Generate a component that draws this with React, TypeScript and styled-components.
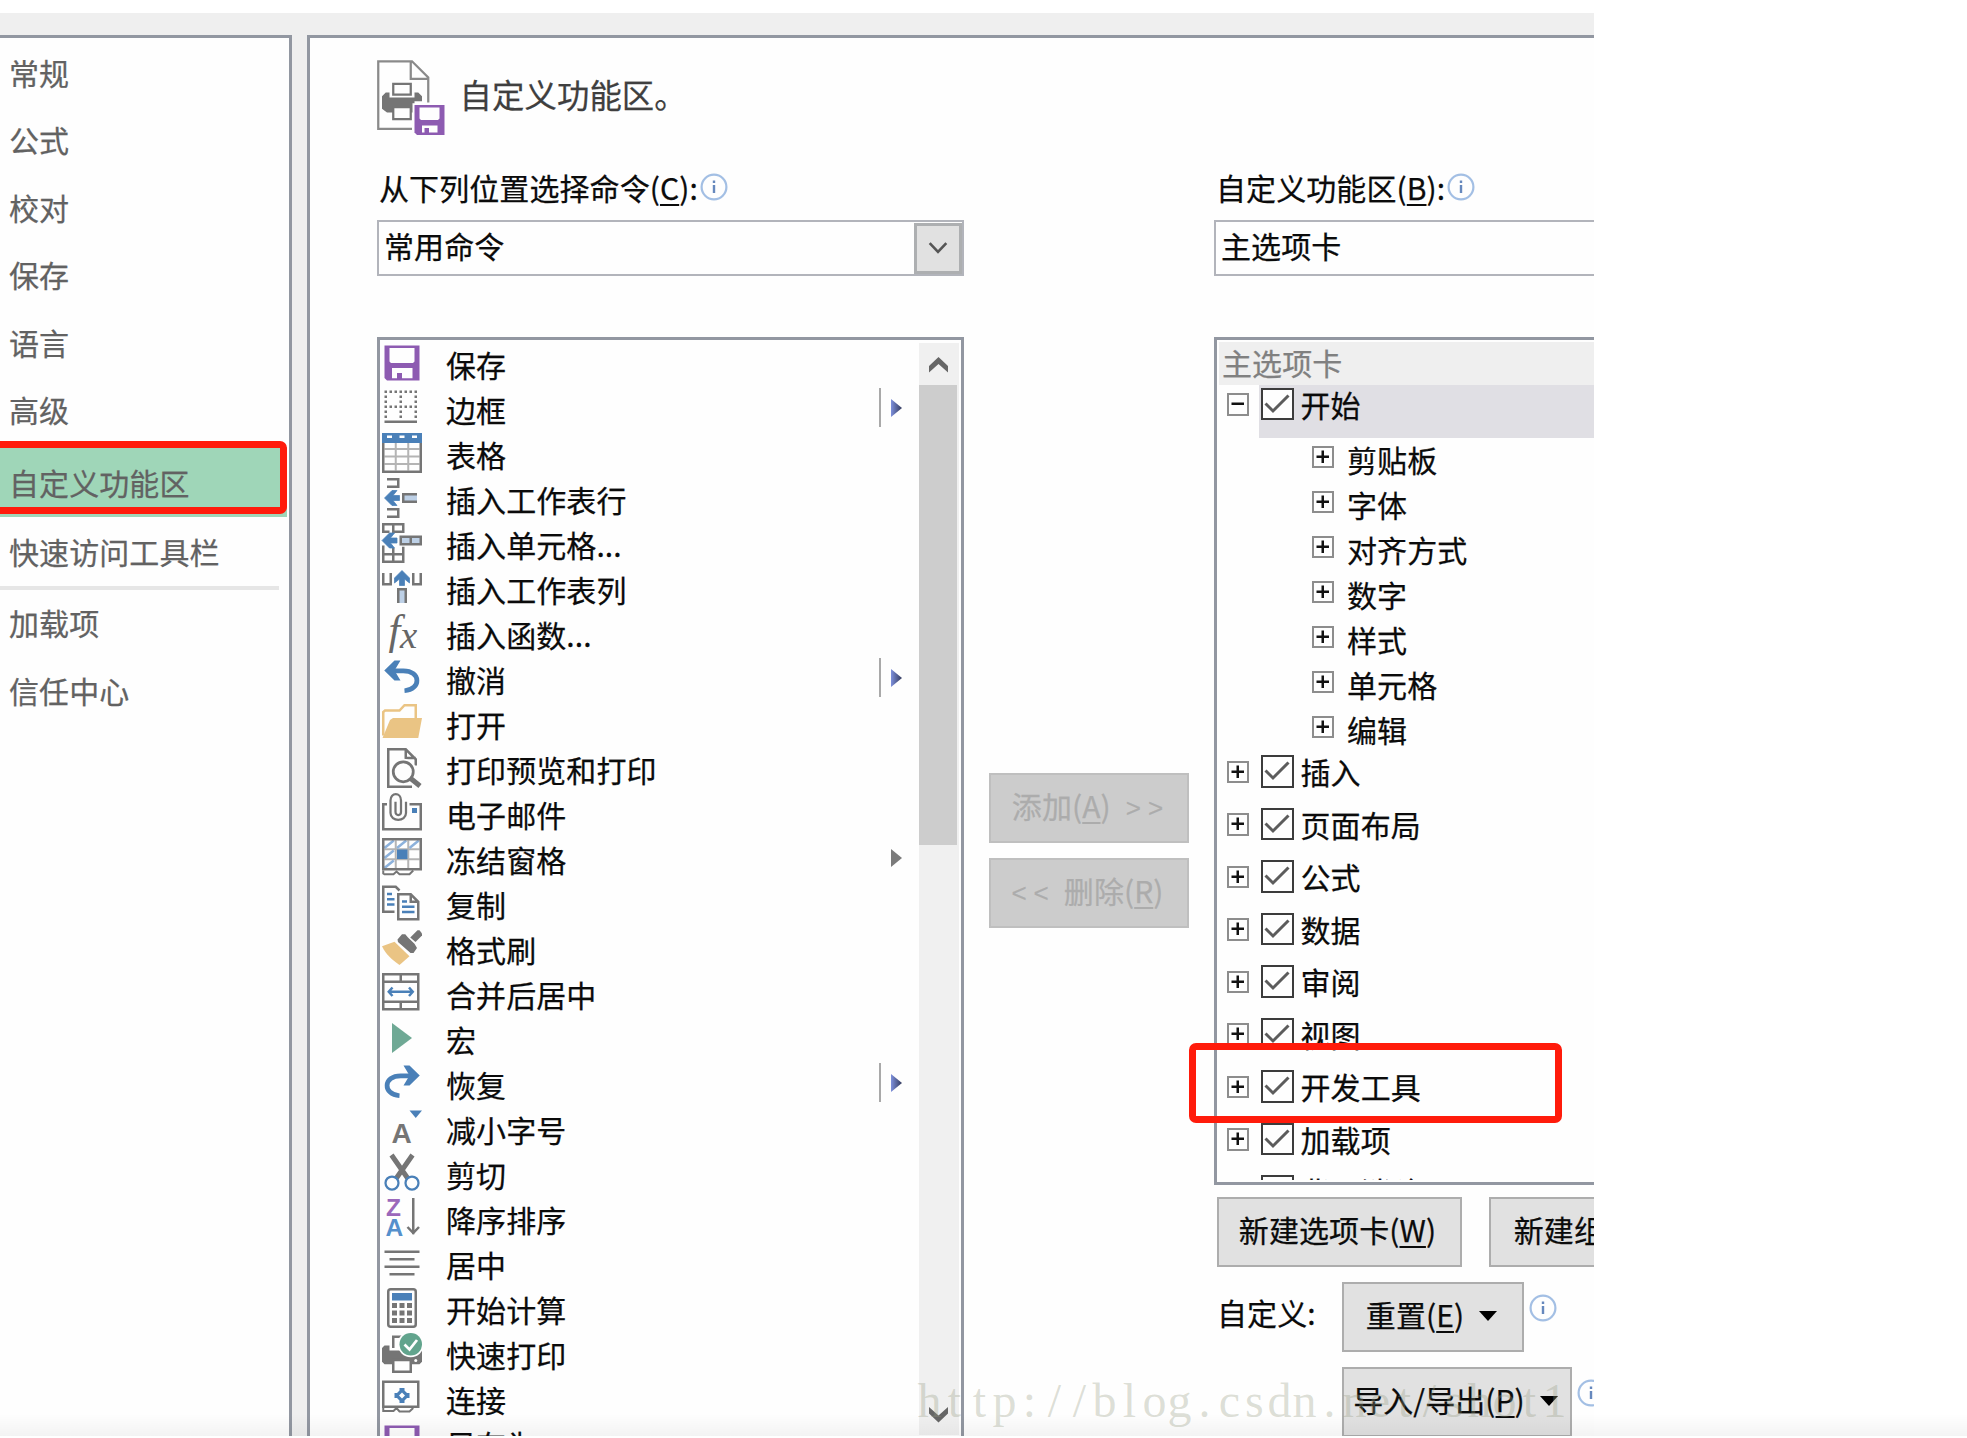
import React from "react";
import styled, { createGlobalStyle, css } from "styled-components";

const GRAY = "#757575";
const BLUE = "#4a80b8";
const PALE = "#bdd0e6";
const PURPLE = "#8d5bb1";
const GOLD = "#eac484";
const GREEN = "#6fa995";

const Global = createGlobalStyle`
  html, body { margin: 0; padding: 0; background: #fff; }
  * { box-sizing: border-box; }
  body {
    font-family: "Noto Sans CJK SC", "Liberation Sans", sans-serif;
    font-size: 30px;
    line-height: 40px;
    letter-spacing: 0.08px;
    color: #0b0b0b;
    -webkit-text-stroke-width: 0.25px;
    overflow: hidden;
  }
`;

const Screen = styled.div`
  position: relative;
  width: 1967px;
  height: 1438px;
  padding-top: 13px;
  overflow: hidden;
  background: #fff;
  white-space: nowrap;
`;

const Dialog = styled.div`
  display: flex;
  gap: 15px;
  width: 1594px;
  height: 1423px;
  padding-top: 22px;
  overflow: hidden;
  background: #efefef;
`;

const frame = css`
  border: 0 solid #9297a1;
`;

const Sidebar = styled.nav`
  ${frame}
  flex: none;
  width: 292px;
  border-top-width: 3px;
  border-right-width: 3px;
  background: #fefefe;
`;

const NavItem = styled.div<{ $active?: boolean }>`
  display: flex;
  align-items: center;
  width: 287px;
  height: ${(p) => (p.$active ? 70 : 67.5)}px;
  margin-top: ${(p) => (p.$active ? 4 : 0)}px;
  padding-left: 9px;
  color: #626262;
  background: ${(p) => (p.$active ? "#9fd6b8" : "transparent")};
`;

const NavRule = styled.div`
  width: 279px;
  height: 4px;
  margin: 1px 0 -1px;
  background: #e6e6e6;
`;

const Content = styled.main`
  ${frame}
  flex: 1;
  min-width: 0;
  padding: 22px 0 0 67px;
  border-top-width: 3px;
  border-left-width: 3px;
  background: #fefefe;
`;

const Title = styled.header`
  display: flex;
  gap: 15px;
  height: 110px;
  font-size: 32.4px;
  color: #3f3f3f;
  span { padding-top: 14px; }
`;

const Columns = styled.div`
  display: flex;
`;

const Column = styled.section<{ $width: number }>`
  flex: none;
  width: ${(p) => p.$width}px;
`;

const Label = styled.div`
  display: flex;
  align-items: flex-start;
  height: 50px;
  padding: 0 0 0 2px;
  line-height: 34px;
`;

const Key = styled.span`
  text-decoration: underline;
  text-decoration-thickness: 2px;
  text-underline-offset: 4px;
`;

const Combo = styled.div`
  display: flex;
  align-items: center;
  justify-content: space-between;
  height: 56px;
  padding-left: 5px;
  border: 2.5px solid #b2b4bb;
  line-height: 44px;
  span { padding-bottom: 6px; }
`;

const ComboButton = styled.div`
  display: flex;
  align-items: center;
  justify-content: center;
  width: 48px;
  height: 51px;
  border: 3px solid #adafb1;
  background: #e1e1e1;
`;

const ListBox = styled.div`
  ${frame}
  display: flex;
  height: 1110px;
  margin-top: 61px;
  padding-top: 3px;
  border-width: 3px;
  overflow: hidden;
`;

const Rows = styled.div`
  flex: 1;
`;

const Row = styled.div`
  display: flex;
  align-items: flex-start;
  height: 45px;
  padding-left: 2px;
  > svg { flex: none; }
`;

const RowText = styled.span`
  flex: 1;
  padding: 1px 0 0 24px;
`;

const SplitMark = styled.span<{ $line: boolean }>`
  display: flex;
  align-items: center;
  width: 40px;
  height: 39px;
  padding-left: 9.5px;
  border-left: 2.5px solid ${(p) => (p.$line ? "#a9a9a9" : "transparent")};
`;

const ScrollBar = styled.div`
  display: flex;
  flex-direction: column;
  justify-content: space-between;
  width: 40px;
  height: 1092px;
  margin-right: 2px;
  background: #f0f0f0;
`;

const ScrollCap = styled.div`
  display: flex;
  justify-content: center;
  align-items: center;
  width: 38px;
  height: 42px;
  padding-top: 2px;
`;

const Thumb = styled.div`
  width: 38px;
  height: 460px;
  margin-bottom: auto;
  background: #cdcdcd;
`;

const Transfer = styled.div`
  display: flex;
  flex: none;
  flex-direction: column;
  gap: 14.5px;
  width: 250px;
  padding: 603px 0 0 25px;
`;

const PushButton = styled.div<{ $w: number; $off?: boolean }>`
  display: flex;
  flex: none;
  align-items: center;
  justify-content: center;
  gap: 15px;
  width: ${(p) => p.$w}px;
  height: 70px;
  padding: 0 3px 6px 0;
  border: 2.5px solid ${(p) => (p.$off ? "#bfbfbf" : "#adadad")};
  background: ${(p) => (p.$off ? "#cccccc" : "#e1e1e1")};
  color: ${(p) => (p.$off ? "#acacac" : "#0b0b0b")};
  > svg { margin-top: 3px; }
`;

const Chevrons = styled.span`
  font-family: "Liberation Sans", sans-serif;
  font-size: 26px;
  letter-spacing: 7px;
  margin-right: -7px;
  padding-top: 6px;
`;

const Tree = styled.div`
  ${frame}
  height: 848px;
  margin-top: 61px;
  padding: 2px 2px 0;
  border-width: 3px;
  overflow: hidden;
`;

const TreeClip = styled.div`
  height: 837.5px;
  overflow: hidden;
`;

const TreeHead = styled.div`
  height: 43px;
  padding-left: 3px;
  line-height: 40px;
  color: #808080;
  background: #efefef;
`;

const Branch = styled.div`
  display: flex;
  height: 52.5px;
  padding-left: 7.5px;
`;

const BranchBody = styled.div<{ $selected: boolean }>`
  display: flex;
  flex: 1;
  gap: 7px;
  margin-left: 10px;
  padding: 2.5px 0 0 2px;
  line-height: 33px;
  background: ${(p) => (p.$selected ? "#e0dfe4" : "transparent")};
`;

const Leaf = styled.div`
  display: flex;
  gap: 13px;
  height: 45px;
  padding-left: 92.5px;
  line-height: 43px;
`;

const Expander = styled.span`
  display: flex;
  flex: none;
  width: 22.5px;
  height: 22.5px;
  margin-top: 8px;
  border: 2.5px solid #8d8d8d;
  background: #fefefe;
`;

const CheckBox = styled.span`
  display: flex;
  flex: none;
  width: 32.5px;
  height: 32.5px;
  border: 2.5px solid #3c3c3c;
  background: #fefefe;
`;

const Actions = styled.div<{ $top: number; $left: number; $gap: number }>`
  display: flex;
  gap: ${(p) => p.$gap}px;
  margin: ${(p) => p.$top}px 0 0 ${(p) => p.$left}px;
`;

const ActionLabel = styled.span`
  width: 110px;
  padding-top: 10px;
`;

const InfoSlot = styled.span<{ $top: number; $left?: number }>`
  display: flex;
  flex: none;
  margin: ${(p) => p.$top}px 0 0 ${(p) => p.$left ?? 0}px;
`;

const Highlight = styled.div<{ $x: number; $y: number; $w: number; $h: number }>`
  position: absolute;
  left: ${(p) => p.$x}px;
  top: ${(p) => p.$y}px;
  width: ${(p) => p.$w}px;
  height: ${(p) => p.$h}px;
  border: 7.5px solid #ff1b0b;
  border-radius: 7px;
`;

const Watermark = styled.div`
  position: absolute;
  left: 917px;
  top: 1376px;
  display: grid;
  grid-auto-flow: column;
  grid-auto-columns: 25px;
  justify-items: center;
  font: 48px/50px "Liberation Serif", serif;
  -webkit-text-stroke-width: 0;
  color: rgba(150, 155, 130, 0.33);
`;

const BottomShade = styled.div`
  position: absolute;
  left: 0;
  top: 1414px;
  width: 1967px;
  height: 22px;
  background: linear-gradient(rgba(0, 0, 0, 0), rgba(0, 0, 0, 0.045));
`;

const Icon = ({ children }: { children: React.ReactNode }) => (
  <svg width="40" height="40" viewBox="0 0 16 16" fill="none" stroke={GRAY} strokeWidth="1" overflow="visible">
    {children}
  </svg>
);

const Floppy = () => (
  <>
    <path d="M1 1H15V15H2L1 14Z" fill={PURPLE} stroke="none" />
    <path d="M3 2H13V7.4L12.4 8H3.6L3 7.4ZM4 10H12.2V14.1H8V12H6V14.1H4Z" fill="#fefefe" stroke="none" />
  </>
);

const icons: Record<string, React.ReactNode> = {
  save: <Floppy />,
  border: (
    <>
      <path d="M1 1.5H14M1 7.5H14M1.5 1V12M7.5 1V12M13.5 1V12" strokeDasharray="1 1" />
      <path d="M1 13.5H14" />
    </>
  ),
  table: (
    <>
      <path d="M5.5 4V15M10.5 4V15M1 6.4H15M1 9.4H15M1 12.4H15" stroke="#b4b4b4" strokeWidth=".8" />
      <rect x=".5" y=".5" width="15" height="15" />
      <path d="M0 0H16V4H0Z" fill={BLUE} stroke="none" />
      <path d="M2 1.5H4M7 1.5H9M12 1.5H14" stroke="#fff" strokeWidth="1" />
    </>
  ),
  insRow: (
    <>
      <path d="M2 .5H6.5V3.5H2M2 12.5H6.5V15.5H2" />
      <path d="M14 6.5H8.5V9.5H14" fill={PALE} />
      <path d="M1 8L4 5H6L4.4 7H7V9H4.4L6 11H4Z" fill={BLUE} stroke={BLUE} strokeWidth=".3" />
    </>
  ),
  insCell: (
    <>
      <path d="M3 3.5H.5V.5H8.5V3.5H4.5V.5M.5 9V15.5H8.5V9.5M4.5 10V15.5M.5 12.5H8.5" />
      <rect x="7.5" y="5.5" width="8" height="3" fill={PALE} />
      <path d="M11.5 5.5V8.5" />
      <path d="M0 7L3 4H5L3.4 6H6V8H3.4L5 10H3Z" fill={BLUE} stroke={BLUE} strokeWidth=".3" />
    </>
  ),
  insCol: (
    <>
      <path d="M.5 2V6.5H3.5V2M12.5 2V6.5H15.5V2" />
      <path d="M6.5 14V8.5H9.5V14" fill={PALE} />
      <path d="M8 1L11 4V6L9 4.4V7H7V4.4L5 6V4Z" fill={BLUE} stroke={BLUE} strokeWidth=".3" />
    </>
  ),
  fx: (
    <g fill="#666" stroke="none" fontFamily="Liberation Serif, serif" fontStyle="italic">
      <text x="2.6" y="12.4" fontSize="17">f</text>
      <text x="7.2" y="13.8" fontSize="15.5">x</text>
    </g>
  ),
  undo: (
    <>
      <path d="M3 5.1H8.5C15.6 5.1 15.8 12.6 9 13.1" stroke={BLUE} strokeWidth="1.9" />
      <path d="M.9 5L5 1H7.4L5 5L7.4 9H5Z" fill={BLUE} stroke="none" />
    </>
  ),
  open: (
    <>
      <path d="M.5 13V3.6L1.2 3H7L9 .9H13.5V6" stroke={GOLD} />
      <path d="M.2 14L3.2 6.8L4.4 6H16L14.5 14Z" fill={GOLD} stroke="none" />
    </>
  ),
  preview: (
    <>
      <path d="M12 15.5H2.5V.5H9.5L13.5 4.5V7M9.5 .5V4H13.5" />
      <circle cx="8.5" cy="9.5" r="5.2" fill="#fefefe" stroke="none" />
      <circle cx="8.5" cy="9.5" r="4" strokeWidth="1.1" />
      <path d="M11.5 12.2L15.2 15.2" strokeWidth="2" />
    </>
  ),
  mail: (
    <>
      <path d="M2 4.5H.5V14.5H15.5V4.5H11" />
      <rect x="12" y="6" width="2" height="2" fill={BLUE} stroke="none" />
      <path d="M3.4 3V8C3.4 11.6 9.6 11.6 9.6 8V3.5M3.4 3C3.4-.4 7.6-.4 7.6 3V7.6C7.6 9.2 5.4 9.2 5.4 7.6V3.5" strokeWidth=".9" />
    </>
  ),
  freeze: (
    <>
      <path d="M5.5 1V12M10.5 1V12M1 4.5H15M1 8.5H15" stroke="#b4b4b4" strokeWidth=".8" />
      <path d="M1 4L4.7 1M6 4L9.7 1M11 4L14.7 1M1 8L4.7 5M1 12L4.7 9" stroke="#8db2dc" strokeWidth="1" />
      <rect x="6" y="4.6" width="4.2" height="3.8" fill={BLUE} stroke="none" />
      <path d="M.5 .5H15.5V12.5H.5Z" />
      <path d="M.5 13V14.2L1 14.5H4.6L5.8 13.4L7 14.5H11L12.5 13" strokeWidth=".8" />
    </>
  ),
  copy: (
    <>
      <path d="M5 11.5H.5V1.5H5.5L7 3" />
      <path d="M2 4.4H4M2 6.5H5M2 8.6H5" stroke={BLUE} />
      <path d="M6.5 4.5H11.5L14.5 7.5V14.5H6.5ZM11.5 4.5V7.5H14.5" fill="#fefefe" />
      <path d="M8 7.4H10M8 9.5H13M8 11.6H13" stroke={BLUE} />
    </>
  ),
  brush: (
    <g stroke="none">
      <path d="M0 7.3L5 5.5L11 11.3L7 14.8C4 12.8 1.6 10.6 0 7.3Z" fill={GOLD} />
      <path d="M6.2 4.6L8 2.5H9.3L10.4 3.8L13 6.3L14 8L12.6 10H11.4L6.4 5.6Z" fill={GRAY} />
      <path d="M11.3 3.8L14.2 .9H15L16 2.2V3L13.4 5.6Z" fill={GRAY} />
    </g>
  ),
  merge: (
    <>
      <path d="M.5 .5H14.5V14.5H.5ZM.5 3.5H14.5M.5 11.5H14.5M7.5 .5V3.5M7.5 11.5V14.5" />
      <path d="M3 7.5H12M4.2 5.8L2.7 7.5L4.2 9.2M10.8 5.8L12.3 7.5L10.8 9.2" stroke={BLUE} />
    </>
  ),
  macro: <path d="M4 2L12 8L4 14Z" fill={GREEN} stroke="none" />,
  redo: (
    <>
      <path d="M13 5.1H7.5C.4 5.1 .2 12.6 7 13.1" stroke={BLUE} strokeWidth="1.9" />
      <path d="M15.1 5L11 1H8.6L11 5L8.6 9H11Z" fill={BLUE} stroke="none" />
    </>
  ),
  shrink: (
    <>
      <text x="3.8" y="14" fontSize="11.2" fontWeight="700" fontFamily="Liberation Sans, sans-serif" fill={GRAY} stroke="none">A</text>
      <path d="M11 1H16L13.5 4Z" fill={BLUE} stroke="none" />
    </>
  ),
  cut: (
    <>
      <path d="M3.8 .8L10.2 10M12.2 .8L5.8 10" strokeWidth="2" />
      <circle cx="4" cy="12" r="2.6" stroke={BLUE} fill="#fefefe" strokeWidth=".9" />
      <circle cx="12" cy="12" r="2.6" stroke={BLUE} fill="#fefefe" strokeWidth=".9" />
    </>
  ),
  sort: (
    <>
      <g fontFamily="Liberation Sans, sans-serif" stroke="none" fontSize="9.8" fontWeight="700">
        <text x="1.6" y="7" fill="#9b68bb">Z</text>
        <text x="1.4" y="15" fill="#5590cc">A</text>
      </g>
      <path d="M12.5 0V14.5M10.2 11.6L12.5 14L14.8 11.6" />
    </>
  ),
  center: <path d="M1 3.5H15M3 6.5H13M1 9.5H15M3 12.5H13" />,
  calc: (
    <>
      <rect x="2.5" y=".5" width="11" height="15" rx="1" />
      <rect x="4" y="2" width="8" height="3" fill={BLUE} stroke="none" />
      <path d="M4 7H6M7 7H9M10 7H12M4 10H6M7 10H9M10 10H12M4 13H6M7 13H9M10 13H12" strokeWidth="2" />
    </>
  ),
  quick: (
    <>
      <path d="M4.5 6V1.5H8" />
      <path d="M0 6L1 5H3V7H13V6H15L16 7V11.5L15 12.5H1L0 11.5Z" fill={GRAY} stroke="none" />
      <rect x="4.5" y="10.8" width="7" height="4.7" fill="#fefefe" />
      <circle cx="11.5" cy="4.5" r="5.2" fill="#fefefe" stroke="none" />
      <circle cx="11.5" cy="4.5" r="4.5" fill="#62a48d" stroke="none" />
      <path d="M9 4.6L11 6.6L14 2.8" stroke="#fff" strokeWidth="1.1" />
      <circle cx="13.5" cy="11" r=".6" fill="#fefefe" stroke="none" />
    </>
  ),
  connect: (
    <>
      <path d="M.5 1.5H14.5V11.5H.5Z" />
      <path d="M.5 12V13.2H4.6L5.8 12L7 13.4H11L12.5 12" strokeWidth=".8" />
      <path
        d="M7 4H9V5L10 6H11V8H10L9 9V10H7V9L6 8H5V6H6L7 5ZM8 5.8L6.8 7L8 8.2L9.2 7Z"
        fill={BLUE}
        fillRule="evenodd"
        stroke="none"
      />
    </>
  ),
};

const commands: { icon: string; text: string; more?: "split" | "menu" }[] = [
  { icon: "save", text: "保存" },
  { icon: "border", text: "边框", more: "split" },
  { icon: "table", text: "表格" },
  { icon: "insRow", text: "插入工作表行" },
  { icon: "insCell", text: "插入单元格..." },
  { icon: "insCol", text: "插入工作表列" },
  { icon: "fx", text: "插入函数..." },
  { icon: "undo", text: "撤消", more: "split" },
  { icon: "open", text: "打开" },
  { icon: "preview", text: "打印预览和打印" },
  { icon: "mail", text: "电子邮件" },
  { icon: "freeze", text: "冻结窗格", more: "menu" },
  { icon: "copy", text: "复制" },
  { icon: "brush", text: "格式刷" },
  { icon: "merge", text: "合并后居中" },
  { icon: "macro", text: "宏" },
  { icon: "redo", text: "恢复", more: "split" },
  { icon: "shrink", text: "减小字号" },
  { icon: "cut", text: "剪切" },
  { icon: "sort", text: "降序排序" },
  { icon: "center", text: "居中" },
  { icon: "calc", text: "开始计算" },
  { icon: "quick", text: "快速打印" },
  { icon: "connect", text: "连接" },
  { icon: "save", text: "另存为" },
];

const tabs: { text: string; groups?: string[] }[] = [
  { text: "开始", groups: ["剪贴板", "字体", "对齐方式", "数字", "样式", "单元格", "编辑"] },
  { text: "插入" },
  { text: "页面布局" },
  { text: "公式" },
  { text: "数据" },
  { text: "审阅" },
  { text: "视图" },
  { text: "开发工具" },
  { text: "加载项" },
  { text: "背景消除" },
];

const Info = () => (
  <svg width="28" height="28" viewBox="0 0 28 28" fill="none">
    <circle cx="14" cy="14" r="12.4" stroke="#a3bfe4" strokeWidth="2.2" />
    <path d="M14 12V20M14 7.5V10" stroke="#6688bd" strokeWidth="2.4" />
  </svg>
);

const Toggle = ({ open = false }: { open?: boolean }) => (
  <Expander>
    <svg width="17.5" height="17.5" viewBox="0 0 7 7" stroke="#111" strokeWidth="1">
      <path d={open ? "M1 3.5H6" : "M1 3.5H6M3.5 1V6"} />
    </svg>
  </Expander>
);

const Check = () => (
  <CheckBox>
    <svg width="27.5" height="27.5" viewBox="0 0 11 11" fill="none" stroke="#5c5c5c" strokeWidth="1.2">
      <path d="M1 5.4L4 8.4L10.2 2.2" />
    </svg>
  </CheckBox>
);

const Down = () => (
  <svg width="18" height="10" viewBox="0 0 18 10">
    <path d="M0 0H18L9 10Z" fill="#000" />
  </svg>
);

const HeaderIcon = () => (
  <svg width="67.5" height="75" viewBox="0 0 27 30" fill="none" stroke="#8a8a8a" strokeWidth=".9">
    <path d="M14 27.5H.5V.5H14L20.5 7V17M13.5 .5V7.5H20.5" />
    <path d="M2 14.5L3.5 13H5V15H15V13H16.5L18 14.5V16.5H15V21H4L2 19.5Z" fill={GRAY} stroke="none" />
    <path d="M6.5 9.5H13.5V13.8H6.5ZM6.5 18.8H13.5V23.6H6.5Z" fill="#fefefe" stroke={GRAY} />
    <path d="M14.2 17.3H27V30H14.2Z" fill="#fefefe" stroke="none" />
    <path d="M15 18H27V30H16L15 29Z" fill={PURPLE} stroke="none" />
    <path d="M17 19H25V23.4L24.4 24H17.6L17 23.4ZM18 26.2H24.2V29H20.8V27.2H19V29H18Z" fill="#fefefe" stroke="none" />
  </svg>
);

const watermark = "http://blog.csdn.net/shot1";

export default function App() {
  return (
    <Screen>
      <Global />
      <Dialog>
        <Sidebar>
          {["常规", "公式", "校对", "保存", "语言", "高级"].map((t) => (
            <NavItem key={t}>{t}</NavItem>
          ))}
          <NavItem $active>自定义功能区</NavItem>
          <NavItem>快速访问工具栏</NavItem>
          <NavRule />
          <NavItem>加载项</NavItem>
          <NavItem>信任中心</NavItem>
        </Sidebar>
        <Content>
          <Title>
            <HeaderIcon />
            <span>自定义功能区。</span>
          </Title>
          <Columns>
            <Column $width={587}>
              <Label>
                从下列位置选择命令(<Key>C</Key>):
                <InfoSlot $top={3} $left={2}><Info /></InfoSlot>
              </Label>
              <Combo>
                <span>常用命令</span>
                <ComboButton>
                  <svg width="20" height="14" viewBox="0 0 22 16" fill="none" stroke="#555" strokeWidth="3">
                    <path d="M1.5 2.5L11 12.5L20.5 2.5" />
                  </svg>
                </ComboButton>
              </Combo>
              <ListBox>
                <Rows>
                  {commands.map((c) => (
                    <Row key={c.text}>
                      <Icon>{icons[c.icon]}</Icon>
                      <RowText>{c.text}</RowText>
                      {c.more && (
                        <SplitMark $line={c.more === "split"}>
                          <svg width="11" height="18" viewBox="0 0 11 18">
                            <defs>
                              <linearGradient id="arrowFill">
                                <stop offset="0" stopColor="#7d90dc" />
                                <stop offset="1" stopColor="#333a5c" />
                              </linearGradient>
                            </defs>
                            <path d="M0 0L11 9L0 18Z" fill={c.more === "split" ? "url(#arrowFill)" : "#7b7b7b"} />
                          </svg>
                        </SplitMark>
                      )}
                    </Row>
                  ))}
                </Rows>
                <ScrollBar>
                  <ScrollCap>
                    <svg width="19" height="16" viewBox="0 0 19 16" fill="#666">
                      <path d="M9.5 0L19 9V15.5L9.5 7L0 15.5V9Z" />
                    </svg>
                  </ScrollCap>
                  <Thumb />
                  <ScrollCap>
                    <svg width="19" height="16" viewBox="0 0 19 16" fill="#666">
                      <path d="M9.5 15.5L19 6.5V0L9.5 8.5L0 0V6.5Z" />
                    </svg>
                  </ScrollCap>
                </ScrollBar>
              </ListBox>
            </Column>
            <Transfer>
              <PushButton $w={200} $off>
                <span>添加(<Key>A</Key>)</span>
                <Chevrons>&gt;&gt;</Chevrons>
              </PushButton>
              <PushButton $w={200} $off>
                <Chevrons>&lt;&lt;</Chevrons>
                <span>删除(<Key>R</Key>)</span>
              </PushButton>
            </Transfer>
            <Column $width={460}>
              <Label>
                自定义功能区(<Key>B</Key>):
                <InfoSlot $top={3} $left={2}><Info /></InfoSlot>
              </Label>
              <Combo>
                <span>主选项卡</span>
              </Combo>
              <Tree>
                <TreeClip>
                  <TreeHead>主选项卡</TreeHead>
                  {tabs.map((tab) => (
                    <React.Fragment key={tab.text}>
                      <Branch>
                        <Toggle open={!!tab.groups} />
                        <BranchBody $selected={!!tab.groups}>
                          <Check />
                          {tab.text}
                        </BranchBody>
                      </Branch>
                      {tab.groups?.map((g) => (
                        <Leaf key={g}>
                          <Toggle />
                          {g}
                        </Leaf>
                      ))}
                    </React.Fragment>
                  ))}
                </TreeClip>
              </Tree>
              <Actions $top={12} $left={2.5} $gap={27.5}>
                <PushButton $w={245}><span>新建选项卡(<Key>W</Key>)</span></PushButton>
                <PushButton $w={185}><span>新建组(<Key>N</Key>)</span></PushButton>
              </Actions>
              <Actions $top={15} $left={3} $gap={0}>
                <ActionLabel>自定义:</ActionLabel>
                <InfoSlot $top={0} $left={15}>
                  <PushButton $w={182}>
                    <span>重置(<Key>E</Key>)</span>
                    <Down />
                  </PushButton>
                </InfoSlot>
                <InfoSlot $top={12} $left={5}><Info /></InfoSlot>
              </Actions>
              <Actions $top={15} $left={128} $gap={5}>
                <PushButton $w={230}>
                  <span>导入/导出(<Key>P</Key>)</span>
                  <Down />
                </PushButton>
                <InfoSlot $top={12}><Info /></InfoSlot>
              </Actions>
            </Column>
          </Columns>
        </Content>
      </Dialog>
      <Highlight $x={-12} $y={440.5} $w={299} $h={73} />
      <Highlight $x={1189} $y={1043} $w={373} $h={80} />
      <Watermark>
        {watermark.split("").map((ch, i) => (
          <span key={i}>{ch}</span>
        ))}
      </Watermark>
      <BottomShade />
    </Screen>
  );
}
